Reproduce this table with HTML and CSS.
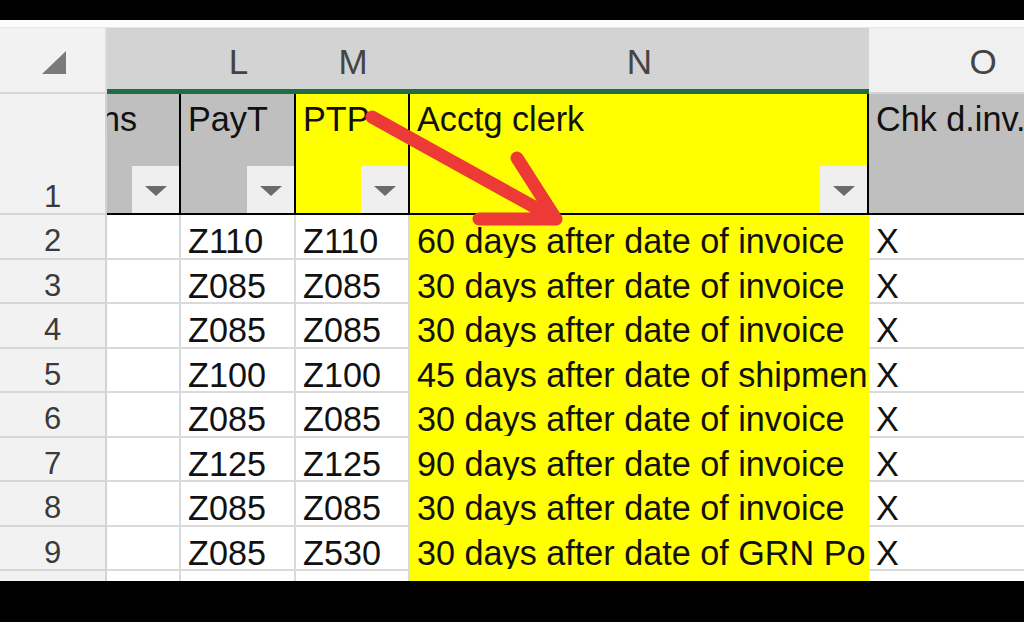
FILE: index.html
```html
<!DOCTYPE html>
<html lang="en">
<head>
<meta charset="utf-8">
<title>Vendor sheet</title>
<link rel="stylesheet" href="styles.css">
</head>
<body>
<div class="app">
  <div class="bar-top"></div>
  <div class="sheet">
    <div class="strip"></div>
    <div class="grid">
      <!-- column headers -->
      <div class="corner">
        <svg width="24" height="23" viewBox="0 0 24 23"><polygon points="24,0 24,23 0,23" fill="#7a7a7a"/></svg>
      </div>
      <div class="colhead sel"></div>
      <div class="colhead sel">L</div>
      <div class="colhead sel">M</div>
      <div class="colhead sel">N</div>
      <div class="colhead plain">O</div>

      <!-- row 1 -->
      <div class="rownum first">1</div>
      <div class="hcell gray"><div class="htext clip">ns</div><div class="dd"><svg width="22" height="10" viewBox="0 0 22 10"><polygon points="0,0 22,0 11,10" fill="#6b6b6b"/></svg></div></div>
      <div class="hcell gray"><div class="htext">PayT</div><div class="dd"><svg width="22" height="10" viewBox="0 0 22 10"><polygon points="0,0 22,0 11,10" fill="#6b6b6b"/></svg></div></div>
      <div class="hcell yellow"><div class="htext">PTP</div><div class="dd"><svg width="22" height="10" viewBox="0 0 22 10"><polygon points="0,0 22,0 11,10" fill="#6b6b6b"/></svg></div></div>
      <div class="hcell yellow"><div class="htext">Acctg clerk</div><div class="dd"><svg width="22" height="10" viewBox="0 0 22 10"><polygon points="0,0 22,0 11,10" fill="#6b6b6b"/></svg></div></div>
      <div class="hcell gray last"><div class="htext">Chk d.inv.</div></div>

      <!-- data rows -->
      <div class="rownum">2</div><div class="cell"></div><div class="cell">Z110</div><div class="cell">Z110</div><div class="cell yl">60 days after date of invoice</div><div class="cell">X</div>
      <div class="rownum">3</div><div class="cell"></div><div class="cell">Z085</div><div class="cell">Z085</div><div class="cell yl">30 days after date of invoice</div><div class="cell">X</div>
      <div class="rownum">4</div><div class="cell"></div><div class="cell">Z085</div><div class="cell">Z085</div><div class="cell yl">30 days after date of invoice</div><div class="cell">X</div>
      <div class="rownum">5</div><div class="cell"></div><div class="cell">Z100</div><div class="cell">Z100</div><div class="cell yl">45 days after date of shipmen</div><div class="cell">X</div>
      <div class="rownum">6</div><div class="cell"></div><div class="cell">Z085</div><div class="cell">Z085</div><div class="cell yl">30 days after date of invoice</div><div class="cell">X</div>
      <div class="rownum">7</div><div class="cell"></div><div class="cell">Z125</div><div class="cell">Z125</div><div class="cell yl">90 days after date of invoice</div><div class="cell">X</div>
      <div class="rownum">8</div><div class="cell"></div><div class="cell">Z085</div><div class="cell">Z085</div><div class="cell yl">30 days after date of invoice</div><div class="cell">X</div>
      <div class="rownum">9</div><div class="cell"></div><div class="cell">Z085</div><div class="cell">Z530</div><div class="cell yl">30 days after date of GRN Po</div><div class="cell">X</div>
      <div class="rownum empty"></div><div class="cell"></div><div class="cell"></div><div class="cell"></div><div class="cell yl"></div><div class="cell"></div>
    </div>
  </div>
  <div class="bar-bottom"></div>

  <svg class="arrow" width="1024" height="622" viewBox="0 0 1024 622">
    <path d="M372 117 L556 219 M517 158 L556 219 L479 219" stroke="#ee3a36" stroke-width="13" stroke-linecap="round" stroke-linejoin="round" fill="none"/>
  </svg>
</div>
</body>
</html>
```
FILE: styles.css
```css
* { box-sizing: border-box; }
html, body { margin: 0; padding: 0; background: #000; }
body { font-family: "Liberation Sans", Arial, sans-serif; }

.app {
  position: relative;
  width: 1024px;
  height: 622px;
  display: flex;
  flex-direction: column;
  background: #000;
  overflow: hidden;
}
.bar-top { height: 20px; flex: none; background: #000; }
.bar-bottom { height: 41px; flex: none; background: #000; }
.sheet {
  height: 561px;
  flex: none;
  background: #fff;
  overflow: hidden;
}
.strip { height: 8px; background: #fcfcfc; border-bottom: 1px solid #e8e8e8; }

.grid {
  display: grid;
  width: 1097px;
  grid-template-columns: 107px 74px 115px 114px 459px 228px;
  grid-template-rows: 66px 121px repeat(8, 44.5px) 44px;
}

.corner {
  background: #f2f2f2;
  border-right: 2px solid #dcdcdc;
  border-bottom: 2px solid #d6d6d6;
  display: flex;
  justify-content: flex-end;
  align-items: flex-end;
  padding: 0 39px 18px 0;
}

.colhead {
  font-size: 35px;
  line-height: 40px;
  color: #444;
  text-align: center;
  padding-top: 14px;
}
.colhead.sel { background: #d3d3d3; border-bottom: 5px solid #1f6d42; }
.colhead.plain { background: #f0f0f0; border-bottom: 2px solid #d4d4d4; }

.rownum {
  background: #f2f2f2;
  border-right: 2px solid #d2d2d2;
  border-bottom: 2px solid #d6d6d6;
  font-size: 31px;
  line-height: 40px;
  color: #3a3a3a;
  text-align: center;
  padding-top: 6px;
}
.rownum.first {
  display: flex;
  align-items: flex-end;
  justify-content: center;
  line-height: 32px;
  padding-top: 0;
}

.hcell {
  display: flex;
  flex-direction: column;
  border-right: 2px solid #000;
  border-bottom: 2px solid #000;
  overflow: hidden;
  font-size: 34.2px;
  line-height: 40px;
  color: #111;
}
.hcell.gray { background: #bfbfbf; }
.hcell.yellow { background: #ffff00; }
.hcell.last { border-right: 0; }
.htext { padding: 5px 6px 0 7px; white-space: nowrap; }
.htext.clip { padding-left: 0; text-indent: -6px; overflow: hidden; }
.dd {
  margin-top: auto;
  align-self: flex-end;
  width: 47px;
  height: 47px;
  background: #efefef;
  display: flex;
  align-items: center;
  justify-content: center;
  padding-top: 3px;
}

.cell {
  background: #fff;
  border-right: 2px solid #dadada;
  border-bottom: 2px solid #dadada;
  font-size: 34.2px;
  line-height: 40px;
  color: #111;
  padding: 6px 0 0 7px;
  white-space: nowrap;
  overflow: hidden;
}
.cell.yl {
  background: #ffff00;
  border-right-color: #ffff00;
  border-bottom-color: #ffff00;
}

.arrow {
  position: absolute;
  left: 0;
  top: 0;
  pointer-events: none;
}
```
